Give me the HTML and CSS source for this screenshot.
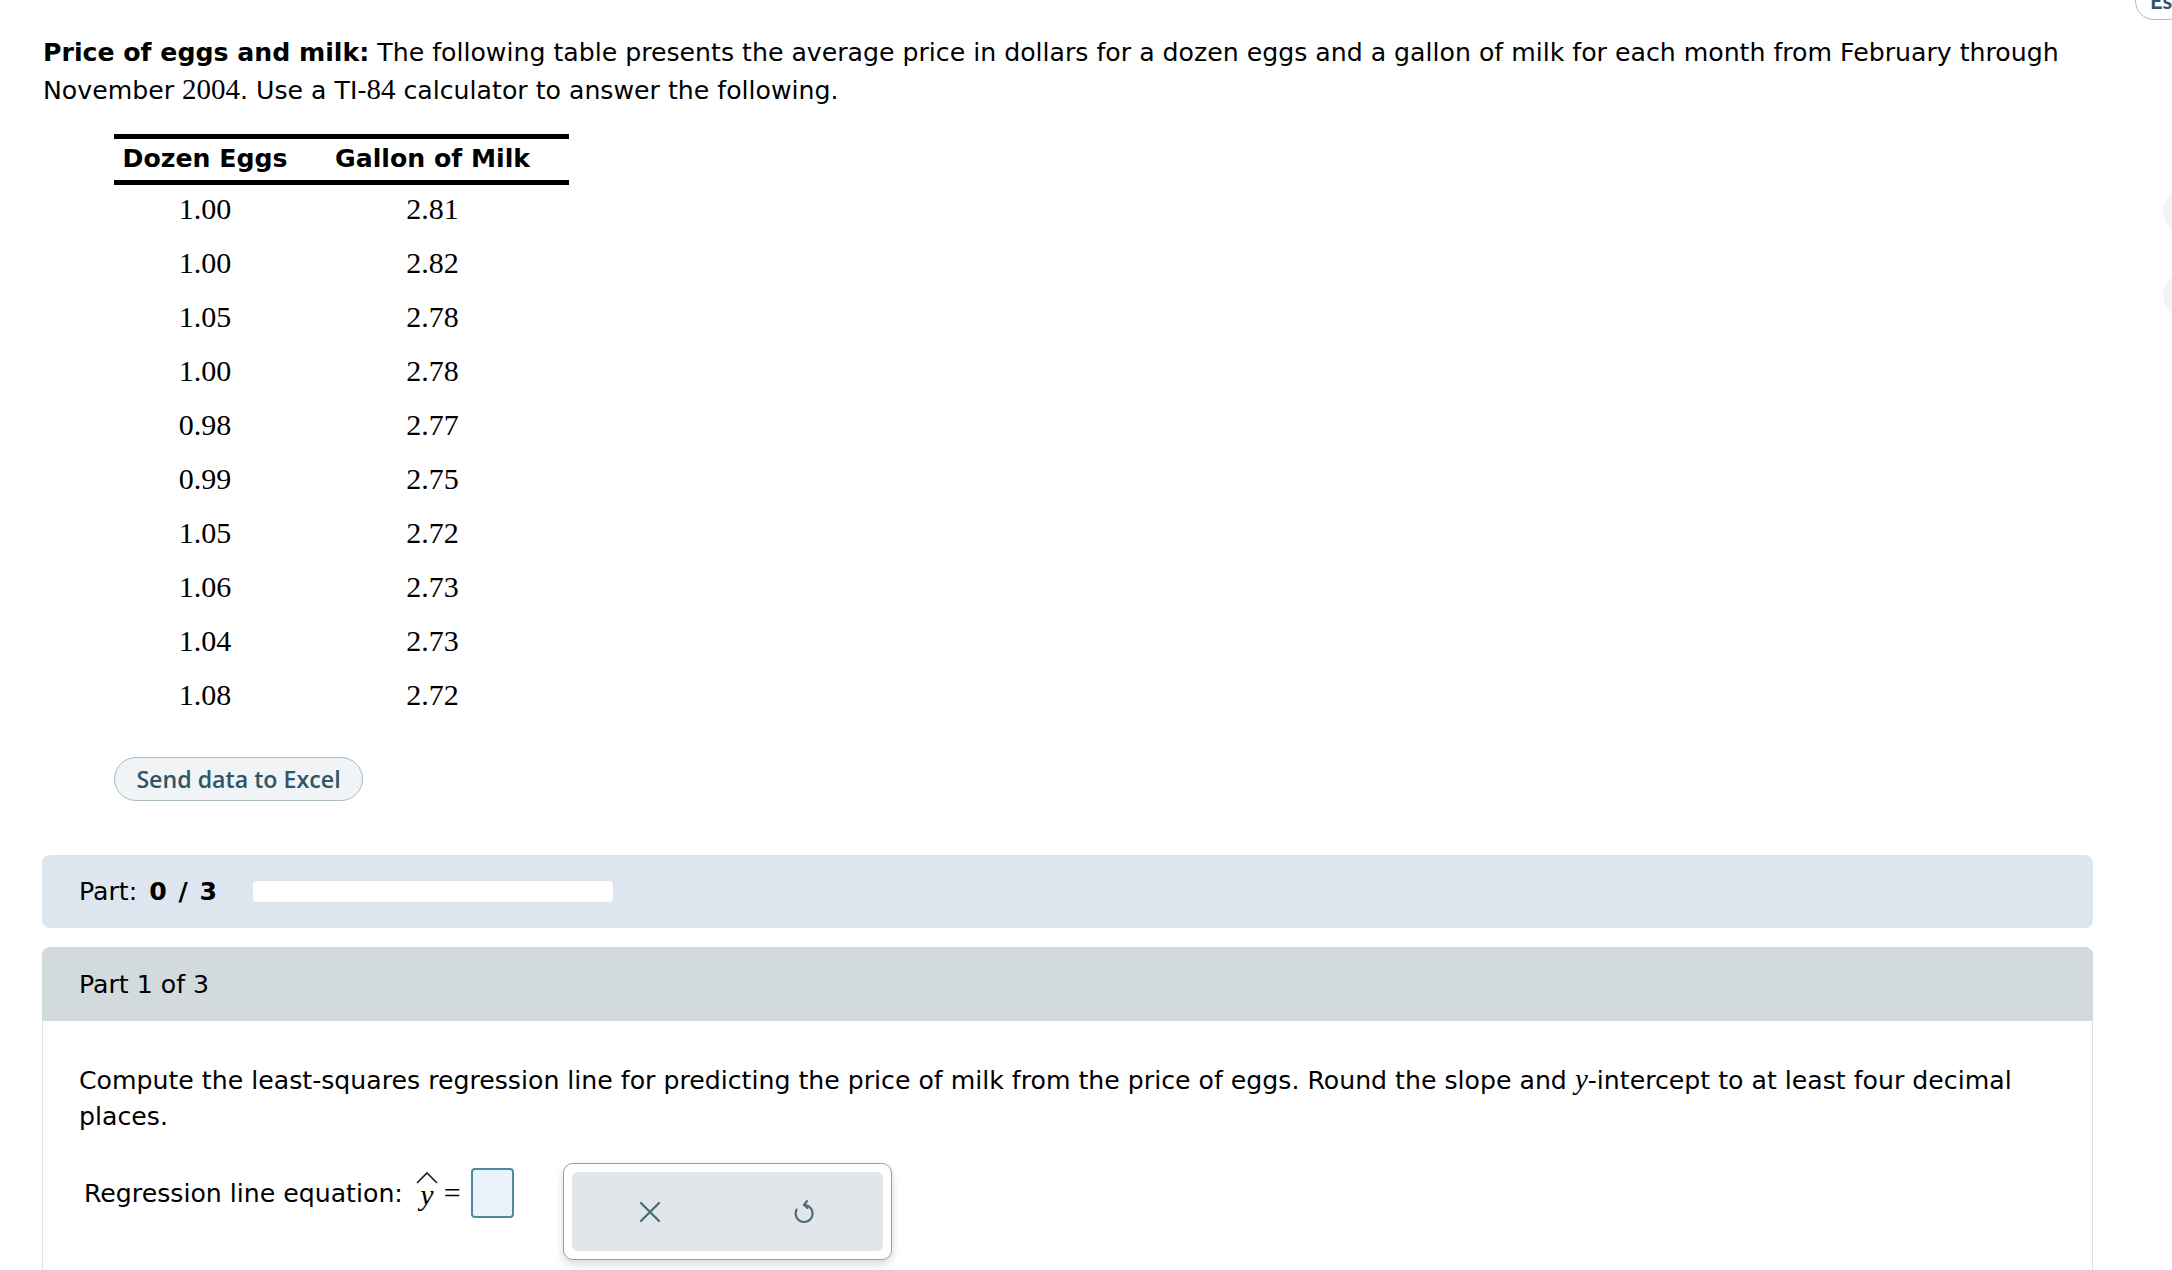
FILE: index.html
```html
<!DOCTYPE html>
<html lang="en">
<head>
<meta charset="utf-8">
<title>Price of eggs and milk</title>
<link rel="stylesheet" href="styles.css">
</head>
<body>
<div class="lang-pill">Es</div>
<div class="side-btn side-btn-top"></div>
<div class="side-btn side-btn-bottom"></div>

<main class="page">
  <p class="intro"><b>Price of eggs and milk:</b> The following table presents the average price in dollars for a dozen eggs and a gallon of milk for each month from February through November <span class="num">2004</span>. Use a TI-<span class="num">84</span> calculator to answer the following.</p>

  <table class="data">
    <thead>
      <tr><th class="col-eggs">Dozen Eggs</th><th class="col-milk">Gallon of Milk</th></tr>
    </thead>
    <tbody>
      <tr><td>1.00</td><td>2.81</td></tr>
      <tr><td>1.00</td><td>2.82</td></tr>
      <tr><td>1.05</td><td>2.78</td></tr>
      <tr><td>1.00</td><td>2.78</td></tr>
      <tr><td>0.98</td><td>2.77</td></tr>
      <tr><td>0.99</td><td>2.75</td></tr>
      <tr><td>1.05</td><td>2.72</td></tr>
      <tr><td>1.06</td><td>2.73</td></tr>
      <tr><td>1.04</td><td>2.73</td></tr>
      <tr><td>1.08</td><td>2.72</td></tr>
    </tbody>
  </table>

  <button class="excel-btn" type="button">Send data to Excel</button>

  <div class="progress">
    <span class="progress-label">Part: <b class="progress-count">0 / 3</b></span>
    <div class="progress-track"></div>
  </div>

  <section class="card">
    <div class="card-head">Part 1 of 3</div>
    <div class="card-body">
      <p class="question">Compute the least-squares regression line for predicting the price of milk from the price of eggs. Round the slope and <span class="mi">y</span>-intercept to at least four decimal places.</p>
      <div class="answer-row">
        <div class="equation">
          <span class="eq-label">Regression line equation:</span>
          <span class="yhat">
            <svg class="hat" width="24" height="13" viewBox="0 0 24 13"><path d="M2 12 L12 2 L22 12" fill="none" stroke="#222" stroke-width="1.7"/></svg>
            <span class="yhat-y">y</span>
          </span>
          <span class="eq-sign">=</span>
          <span class="answer-box"></span>
        </div>
        <div class="toolbar">
          <div class="toolbar-inner">
            <button class="tool-btn" type="button" aria-label="Clear">
              <svg width="24" height="24" viewBox="0 0 24 24"><path d="M3 3 L21 21 M21 3 L3 21" fill="none" stroke="#4b6c79" stroke-width="2.3" stroke-linecap="round"/></svg>
            </button>
            <button class="tool-btn" type="button" aria-label="Undo">
              <svg width="26" height="28" viewBox="0 0 26 28"><path d="M12 7 A8.5 8.5 0 1 1 4.6 11.5" fill="none" stroke="#4b6c79" stroke-width="2.1" stroke-linecap="round"/><path d="M15 3 L12 7 L15.5 10" fill="none" stroke="#4b6c79" stroke-width="2.1" stroke-linecap="round" stroke-linejoin="round"/></svg>
            </button>
          </div>
        </div>
      </div>
    </div>
  </section>
</main>
</body>
</html>
```

FILE: styles.css
```css
html, body {
  margin: 0;
  padding: 0;
  overflow: hidden;
  background: #ffffff;
}

body {
  font-family: "DejaVu Sans", Verdana, sans-serif;
  font-size: 25.2px;
  color: #000;
  position: relative;
  width: 2172px;
  height: 1270px;
}

.lang-pill {
  position: absolute;
  top: -19px;
  left: 2135px;
  height: 37px;
  padding: 0 14px;
  border: 1px solid #a9bcc4;
  border-radius: 19px;
  color: #2f5565;
  font-family: Lato, sans-serif;
  font-weight: 700;
  font-size: 22px;
  line-height: 37px;
  background: #fff;
}

.side-btn {
  position: absolute;
  left: 2163px;
  width: 46px;
  height: 46px;
  border-radius: 50%;
  background: #f1f3f5;
}
.side-btn-top { top: 188px; }
.side-btn-bottom { top: 272px; }

.page {
  margin-left: 42px;
  width: 2051px;
  padding-top: 35px;
}

.intro {
  margin: 0;
  padding-left: 1px;
  line-height: 36px;
}

.num {
  font-family: "Liberation Serif", "Times New Roman", serif;
  font-size: 29px;
}

.mi {
  font-family: "Liberation Serif", "Times New Roman", serif;
  font-style: italic;
  font-size: 29px;
}

.data {
  margin: 25px 0 0 72px;
  border-collapse: collapse;
}

.data th {
  border-top: 5px solid #000;
  border-bottom: 5px solid #000;
  height: 41px;
  padding: 0;
  font-weight: 700;
  text-align: center;
  line-height: 40px;
  vertical-align: top;
}

.col-eggs { width: 182px; }
.col-milk { width: 273px; }

.data td {
  padding: 0 0 6px 0;
  height: 48px;
  line-height: 48px;
  text-align: center;
  font-family: "Liberation Serif", "Times New Roman", serif;
  font-size: 30px;
}

.excel-btn {
  display: block;
  margin: 32px 0 0 72px;
  height: 44px;
  width: 249px;
  padding: 0;
  border: 1px solid #a9bbc3;
  border-radius: 22px;
  background: #f1f4f6;
  color: #2e5666;
  font-family: "Open Sans", Lato, sans-serif;
  font-weight: 600;
  font-size: 23.2px;
}

.progress {
  margin-top: 54px;
  height: 73px;
  background: #dde6ef;
  border-radius: 8px;
  padding-left: 37px;
  display: flex;
  align-items: center;
  gap: 36px;
}

.progress-count {
  margin-left: 4px;
  word-spacing: 3px;
}

.progress-track {
  width: 360px;
  height: 21px;
  background: #fff;
  border-radius: 4px;
}

.card {
  margin-top: 19px;
}

.card-head {
  height: 74px;
  background: #d3dadd;
  border-radius: 8px 8px 0 0;
  padding-left: 37px;
  display: flex;
  align-items: center;
}

.card-body {
  border-left: 1px solid #dce1e4;
  border-right: 1px solid #dce1e4;
  padding: 40px 36px 40px 36px;
}

.question {
  margin: 0;
  line-height: 36px;
}

.answer-row {
  margin-top: 28px;
  display: flex;
  align-items: flex-start;
}

.equation {
  margin-top: 5px;
  height: 50px;
  padding-left: 5px;
  display: flex;
  align-items: center;
}

.yhat {
  display: inline-flex;
  flex-direction: column;
  align-items: center;
  margin-left: 12px;
  margin-top: -4px;
}

.hat {
  display: block;
  margin-bottom: -5px;
}

.yhat-y {
  font-family: "Liberation Serif", "Times New Roman", serif;
  font-style: italic;
  font-size: 30px;
  line-height: 32px;
}

.eq-sign {
  font-family: "Liberation Serif", "Times New Roman", serif;
  font-size: 30px;
  margin: 0 10px 0 5px;
}

.answer-box {
  width: 39px;
  height: 46px;
  border: 2px solid #4e8a9b;
  border-radius: 4px;
  background: #e8f4fa;
}

.toolbar {
  margin-left: 49px;
  width: 311px;
  height: 79px;
  padding: 8px;
  border: 1.5px solid #8fa4ae;
  border-radius: 10px;
  background: #fff;
  box-shadow: 0 4px 9px rgba(0, 0, 0, 0.16);
}

.toolbar-inner {
  display: flex;
  height: 100%;
  background: #e0e6e9;
  border-radius: 6px;
}

.tool-btn {
  flex: 1;
  display: flex;
  align-items: center;
  justify-content: center;
  background: none;
  border: 0;
  padding: 0;
}
```
